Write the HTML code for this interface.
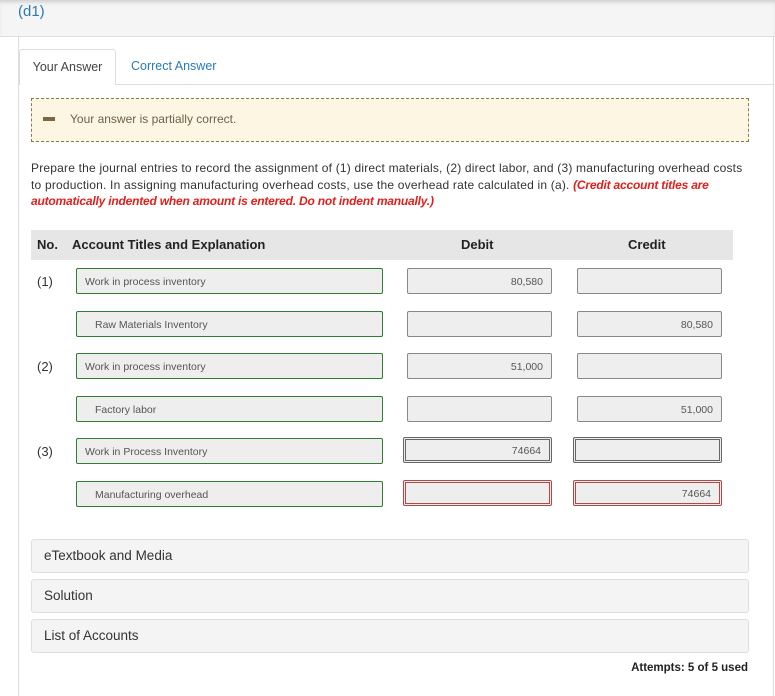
<!DOCTYPE html>
<html><head><style>
*{box-sizing:border-box;margin:0;padding:0}
body{width:775px;height:689px;overflow:hidden;background:#fff;font-family:"Liberation Sans",sans-serif;color:#333;position:relative}
.a{position:absolute}
.inp{position:absolute;height:26px;border:1px solid #2e7d32;background:#eee;border-radius:2px;font-size:10.5px;color:#555;line-height:26px;padding:0 8px}
.num{text-align:right;border-color:#888}
.red{border:3px double #b04848}
.acc{position:absolute;left:31px;width:718px;height:34px;background:#f4f4f4;border:1px solid #ddd;border-radius:3px;font-size:13.5px;color:#333;line-height:32px;padding-left:12px}
</style></head><body>
<div class="a" style="left:0;top:0;width:775px;height:37px;background:#f5f5f5;border-bottom:1px solid #ddd;box-shadow:inset 0 4px 4px -2px #ccc"></div>
<div class="a" style="left:18px;top:36px;width:756px;height:660px;border-left:1px solid #ddd;border-right:1px solid #ddd"></div>
<div class="a" style="left:18px;top:3px;font-size:15px;color:#2a7ab8">(d1)</div>
<div class="a" style="left:19px;top:84px;width:754px;border-top:1px solid #ddd"></div>
<div class="a" style="left:19px;top:49px;width:97px;height:36px;border:1px solid #ddd;border-bottom:none;background:#fff;border-radius:3px 3px 0 0;font-size:12.5px;line-height:34px;text-align:center;color:#444">Your Answer</div>
<div class="a" style="left:131px;top:59px;font-size:12.5px;color:#2a7ab8">Correct Answer</div>
<div class="a" style="left:31px;top:98px;width:718px;height:44px;border:1px dashed #8a7a50;background:#fcf6e3"></div>
<div class="a" style="left:43px;top:117px;width:12px;height:4px;background:#7a6a40"></div>
<div class="a" style="left:70px;top:112px;font-size:12px;color:#6d6247">Your answer is partially correct.</div>
<div class="a" style="left:31px;top:160px;width:740px;white-space:nowrap;font-size:12px;letter-spacing:0.2px;line-height:16.5px;color:#333">Prepare the journal entries to record the assignment of (1) direct materials, (2) direct labor, and (3) manufacturing overhead costs<br>to production. In assigning manufacturing overhead costs, use the overhead rate calculated in (a). <b style="color:#e0201c;font-style:italic;letter-spacing:-0.2px">(Credit account titles are<br>automatically indented when amount is entered. Do not indent manually.)</b></div>
<div class="a" style="left:31px;top:230px;width:702px;height:30px;background:#e6e6e6;font-size:13px;font-weight:bold;line-height:30px;color:#222">
<span class="a" style="left:6px">No.</span><span class="a" style="left:41px">Account Titles and Explanation</span><span class="a" style="left:430px">Debit</span><span class="a" style="left:597px">Credit</span></div>
<div class="a" style="left:37px;top:274px;font-size:13px">(1)</div>
<div class="a" style="left:37px;top:359px;font-size:13px">(2)</div>
<div class="a" style="left:37px;top:444px;font-size:13px">(3)</div>

<div class="inp" style="left:76px;top:268px;width:307px">Work in process inventory</div>
<div class="inp num" style="left:407px;top:268px;width:145px">80,580</div>
<div class="inp num" style="left:577px;top:268px;width:145px"></div>

<div class="inp" style="left:76px;top:311px;width:307px;padding-left:18px">Raw Materials Inventory</div>
<div class="inp num" style="left:407px;top:311px;width:145px"></div>
<div class="inp num" style="left:577px;top:311px;width:145px">80,580</div>

<div class="inp" style="left:76px;top:353px;width:307px">Work in process inventory</div>
<div class="inp num" style="left:407px;top:353px;width:145px">51,000</div>
<div class="inp num" style="left:577px;top:353px;width:145px"></div>

<div class="inp" style="left:76px;top:396px;width:307px;padding-left:18px">Factory labor</div>
<div class="inp num" style="left:407px;top:396px;width:145px"></div>
<div class="inp num" style="left:577px;top:396px;width:145px">51,000</div>

<div class="inp" style="left:76px;top:438px;width:307px">Work in Process Inventory</div>
<div class="inp num red" style="left:403px;top:437px;width:149px;line-height:22px;border-color:#666">74664</div>
<div class="inp num red" style="left:573px;top:437px;width:149px;border-color:#666"></div>

<div class="inp" style="left:76px;top:481px;width:307px;padding-left:18px">Manufacturing overhead</div>
<div class="inp num red" style="left:403px;top:480px;width:149px"></div>
<div class="inp num red" style="left:573px;top:480px;width:149px;line-height:22px">74664</div>

<div class="acc" style="top:539px">eTextbook and Media</div>
<div class="acc" style="top:579px">Solution</div>
<div class="acc" style="top:619px">List of Accounts</div>
<div class="a" style="right:27px;top:662px;font-size:11.5px;font-weight:bold;color:#222">Attempts: 5 of 5 used</div>
</body></html>
